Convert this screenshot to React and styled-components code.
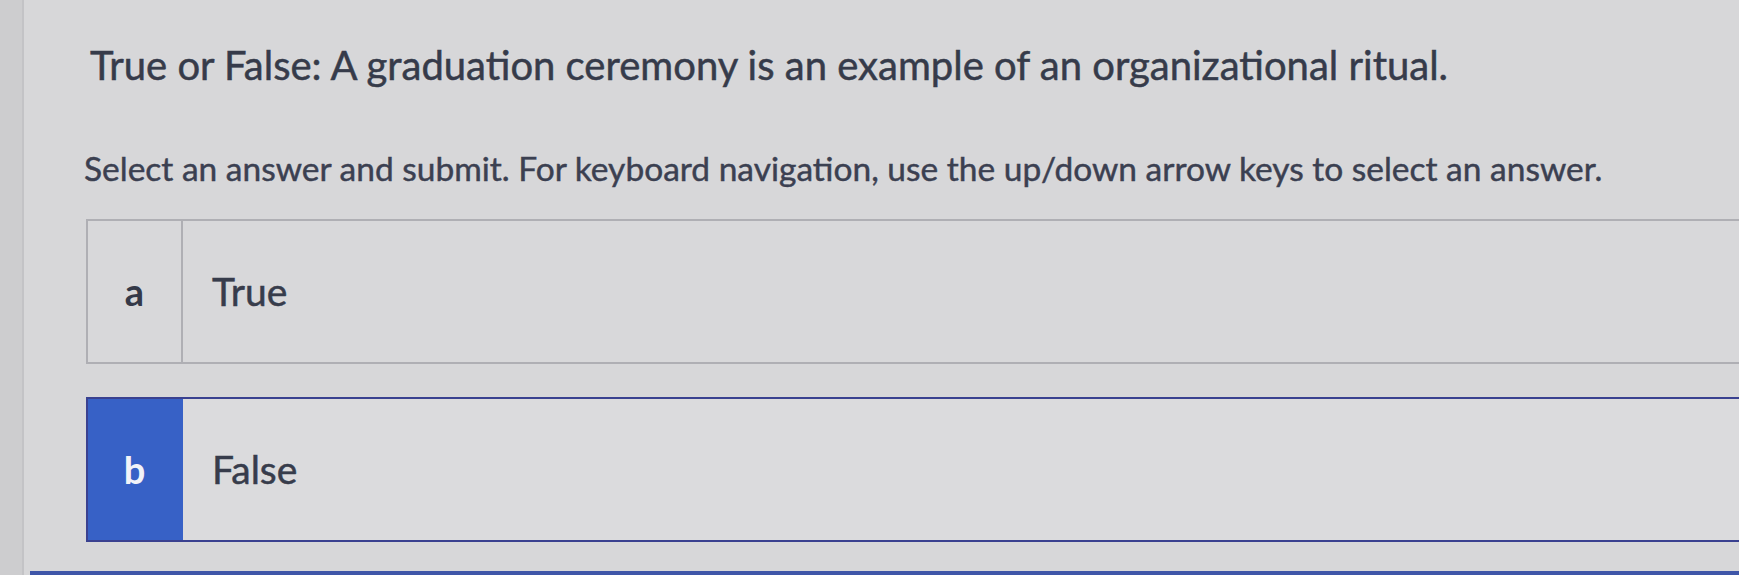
import React, { useState } from "react";
import styled, { createGlobalStyle } from "styled-components";

const Global = createGlobalStyle`
  html, body { margin: 0; padding: 0; background: #d7d7d9; }
  body {
    font-family: Lato, "Noto Sans", sans-serif;
    color: #3a3f4e;
    overflow: hidden;
  }
`;

const Page = styled.div`
  display: flex;
  height: 575px;
  overflow: hidden;
`;

const SideRail = styled.div`
  flex: 0 0 22px;
  background: #cdcdcf;
  border-right: 2px solid #c3c3c6;
`;

const Main = styled.main`
  flex: 1;
  min-width: 0;
  display: flex;
  flex-direction: column;
  padding: 41px 0 0 62px;
`;

const Question = styled.h1`
  margin: 0 0 59px 4px;
  font-size: 40px;
  line-height: 48px;
  font-weight: 400;
  white-space: nowrap;
  color: #363b4a;
  -webkit-text-stroke: 0.5px #363b4a;
`;

const Instructions = styled.p`
  margin: 0 0 31px -2px;
  font-size: 33.5px;
  line-height: 40px;
  white-space: nowrap;
  color: #3b4051;
  -webkit-text-stroke: 0.45px #3b4051;
`;

const Choices = styled.ul`
  list-style: none;
  margin: 0;
  padding: 0;
  display: flex;
  flex-direction: column;
  gap: 33px;
  margin-right: -40px;
`;

const Choice = styled.li`
  display: flex;
  height: 145px;
  box-sizing: border-box;
  border: 2px solid ${(p) => (p.$selected ? "#3a4190" : "#afafb4")};
  border-right: none;
  background: ${(p) => (p.$selected ? "#dbdbdd" : "#d8d8da")};
  cursor: pointer;
`;

const Letter = styled.span`
  flex: 0 0 93px;
  display: flex;
  align-items: center;
  justify-content: center;
  font-size: 38px;
  line-height: 47px;
  font-weight: 700;
  background: ${(p) => (p.$selected ? "#3761c6" : "transparent")};
  color: ${(p) => (p.$selected ? "#f2f3f8" : "#343948")};
  border-right: 2px solid ${(p) => (p.$selected ? "#3761c6" : "#afafb4")};
`;

const Label = styled.span`
  display: flex;
  align-items: center;
  padding-left: 29px;
  font-size: 39px;
  line-height: 47px;
  color: #373c4b;
  -webkit-text-stroke: 0.5px #373c4b;
`;

const SubmitBar = styled.div`
  margin-top: 29px;
  margin-left: -56px;
  height: 4px;
  background: #3f56a8;
`;

const options = [
  { key: "a", text: "True" },
  { key: "b", text: "False" },
];

export default function App() {
  const [selected, setSelected] = useState("b");
  return (
    <>
      <Global />
      <Page>
        <SideRail />
        <Main>
          <Question>
            True or False: A graduation ceremony is an example of an organizational ritual.
          </Question>
          <Instructions>
            Select an answer and submit. For keyboard navigation, use the up/down arrow keys to select an answer.
          </Instructions>
          <Choices role="radiogroup">
            {options.map((o) => (
              <Choice
                key={o.key}
                role="radio"
                aria-checked={selected === o.key}
                $selected={selected === o.key}
                onClick={() => setSelected(o.key)}
              >
                <Letter $selected={selected === o.key}>{o.key}</Letter>
                <Label>{o.text}</Label>
              </Choice>
            ))}
          </Choices>
          <SubmitBar />
        </Main>
      </Page>
    </>
  );
}
